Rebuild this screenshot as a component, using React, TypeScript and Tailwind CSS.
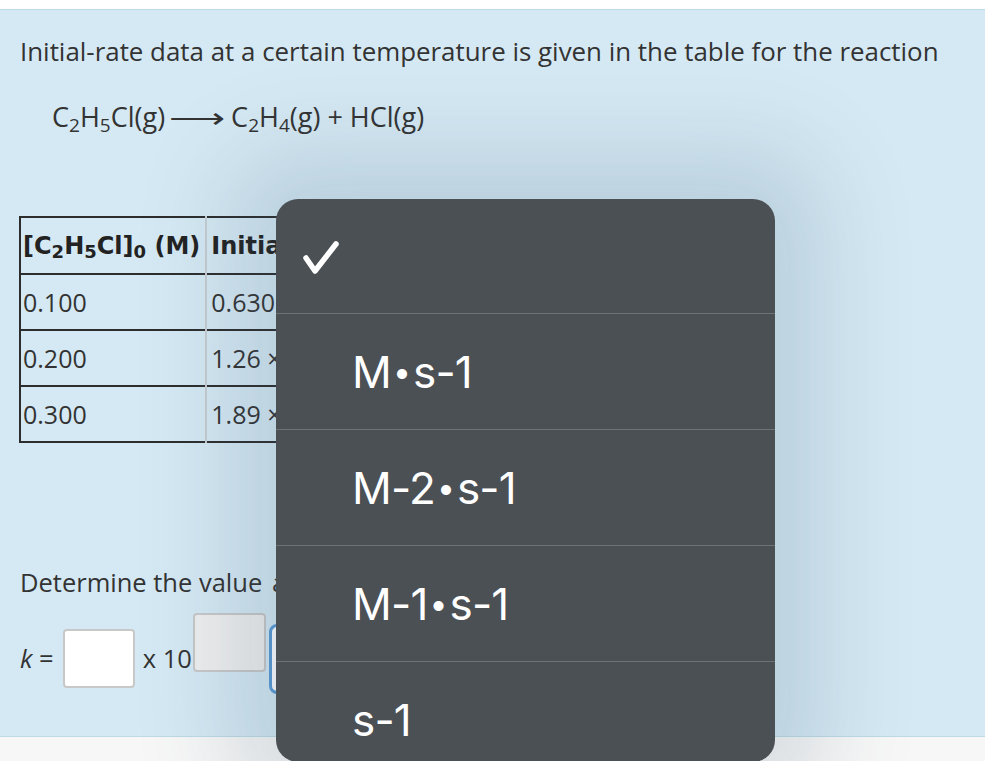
import React from 'react';

const units: [string, string][] = [
  ['M', 's-1'],
  ['M-2', 's-1'],
  ['M-1', 's-1'],
  ['', 's-1'],
];

const rows: { conc: string; rate: string }[] = [
  { conc: '0.100', rate: '0.630' },
  { conc: '0.200', rate: '1.26 × 10' },
  { conc: '0.300', rate: '1.89 × 10' },
];

const UnitMenu: React.FC = () => {
  return (
    <div className="absolute left-[276px] top-[199px] w-[499px] h-[563px] overflow-hidden rounded-[22px] bg-[#4b5055] shadow-[0_0_90px_50px_rgba(60,90,110,0.17)] font-['Inter',sans-serif] text-white">
      <div className="h-[115px] border-b border-[#6d7276] flex items-center pl-[27px] pt-[4px]">
        <svg width="36" height="34" viewBox="0 0 36 34" fill="none">
          <path d="M3 17 L12 30 L33 3" stroke="#ffffff" strokeWidth="5.5" strokeLinecap="round" strokeLinejoin="round" />
        </svg>
      </div>
      {units.map(([a, b]) => (
        <div key={a + b} className="h-[116px] border-b border-[#6d7276] flex items-center pl-[76px] text-[44px] leading-none tracking-[-0.8px]">
          {a}
          {a && <span className="text-[32px] mx-[2px] tracking-normal">•</span>}
          {b}
        </div>
      ))}
    </div>
  );
};

const App: React.FC = () => {
  return (
    <div className="relative w-[985px] h-[761px] overflow-hidden bg-[#f7f7f7] font-['Open_Sans',sans-serif] text-[#333]">
      <div className="h-[9px] bg-white" />
      <div className="h-[728px] border-t border-b border-[#bcdbe4] bg-[#d5e9f4] pl-[20px] pt-[24px]">
        <p className="text-[25.9px] leading-[34px]">
          Initial-rate data at a certain temperature is given in the table for the reaction
        </p>
        <p className="ml-[32px] mt-[32px] text-[27px] leading-[34px] whitespace-nowrap">
          C<sub className="text-[19px]">2</sub>H<sub className="text-[19px]">5</sub>Cl(g)
          <span className="inline-block ml-[13px] mr-[14px] scale-x-[1.45]">⟶</span>
          C<sub className="text-[19px]">2</sub>H<sub className="text-[19px]">4</sub>(g) + HCl(g)
        </p>

        <table className="mt-[82px] -ml-[1px] border-collapse text-[25px] leading-[32px]">
          <thead>
            <tr className="h-[57px] border-t-2 border-b-2 border-[#2d2d2d]">
              <th className="border-l-2 border-r-2 border-l-[#2d2d2d] border-r-[#c6cdd1] pl-[2px] pr-[5px] text-left text-[24px] font-bold font-['DejaVu_Sans',sans-serif] text-[#222] whitespace-nowrap">
                [C<sub className="text-[18px]">2</sub>H<sub className="text-[18px]">5</sub>Cl]<sub className="text-[18px]">0</sub> (M)
              </th>
              <th className="pl-[4px] pr-[8px] text-left text-[24px] font-bold font-['DejaVu_Sans',sans-serif] text-[#222] whitespace-nowrap">
                Initial rate (M/s)
              </th>
            </tr>
          </thead>
          <tbody>
            {rows.map((r) => (
              <tr key={r.conc} className="h-[56px] border-b-2 border-[#2d2d2d]">
                <td className="border-l-2 border-r-2 border-l-[#2d2d2d] border-r-[#c6cdd1] pl-[2px]">{r.conc}</td>
                <td className="pl-[4px] whitespace-nowrap">{r.rate}</td>
              </tr>
            ))}
          </tbody>
        </table>

        <p className="mt-[123px] text-[25.5px] leading-[33px]">
          Determine the value <span className="ml-[3px]">and units of the rate constant.</span>
        </p>

        <div className="mt-[14px] flex items-start h-[81px]">
          <span className="mt-[29px] text-[25.5px] leading-[33px]">
            <i>k</i> =
          </span>
          <div className="ml-[9px] mt-[16px] w-[72px] h-[59px] rounded-[4px] border-2 border-[#c8c8c8] bg-white" />
          <span className="ml-[8px] mt-[29px] text-[25.5px] leading-[33px]">x 10</span>
          <div className="ml-[1px] w-[73px] h-[59px] rounded-[4px] border-2 border-[#c8c8c8] bg-[#efefef]" />
          <div className="ml-[3px] mt-[11px] w-[160px] h-[70px] rounded-[8px] border-[3px] border-[#5a9ad6] bg-white" />
        </div>
      </div>
      <UnitMenu />
    </div>
  );
};

export default App;
